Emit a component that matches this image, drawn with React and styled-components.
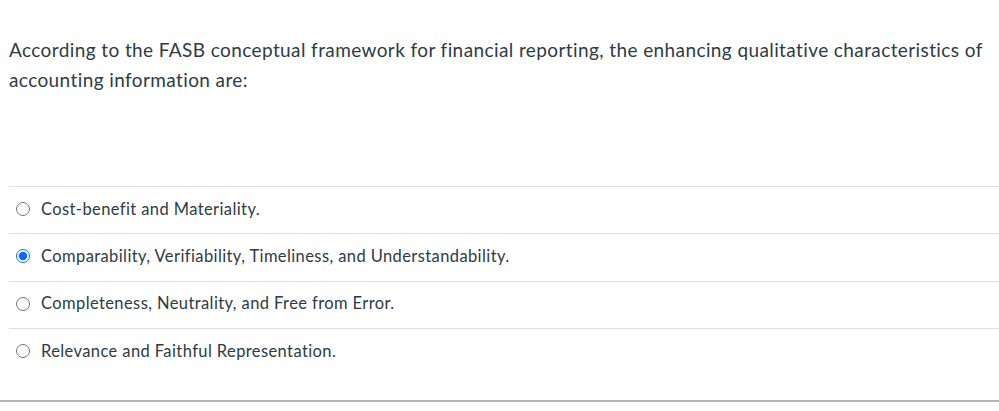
import styled, { createGlobalStyle } from 'styled-components';

const GlobalStyle = createGlobalStyle`
  body {
    margin: 0;
    background: #fff;
    font-family: Lato, "Open Sans", sans-serif;
    color: #2d3b45;
  }
`;

const answers = [
  { id: 'a1', text: 'Cost-benefit and Materiality.' },
  { id: 'a2', text: 'Comparability, Verifiability, Timeliness, and Understandability.' },
  { id: 'a3', text: 'Completeness, Neutrality, and Free from Error.' },
  { id: 'a4', text: 'Relevance and Faithful Representation.' },
];

const App = () => {
  return (
    <>
      <GlobalStyle />
      <Question>
        <QuestionText>
          According to the FASB conceptual framework for financial reporting, the enhancing
          qualitative characteristics of accounting information are:
        </QuestionText>
        <Answers>
          {answers.map((a) => (
            <Answer key={a.id}>
              <Radio type="radio" name="q1" defaultChecked={a.id === 'a2'} />
              <Label>{a.text}</Label>
            </Answer>
          ))}
        </Answers>
      </Question>
    </>
  );
};

const Question = styled.div`
  width: 999px;
  height: 402px;
  box-sizing: border-box;
  border-bottom: 2px solid #b4b4b4;
  display: flex;
  flex-direction: column;
`;

const QuestionText = styled.p`
  margin: 0;
  padding: 35px 8px 0 9px;
  font-size: 19px;
  letter-spacing: 0.4px;
  line-height: 30px;
  height: 186px;
  box-sizing: border-box;
`;

const Answers = styled.div`
  margin-left: 9px;
  display: flex;
  flex-direction: column;
`;

const Answer = styled.label`
  display: flex;
  align-items: center;
  height: 47.33px;
  box-sizing: border-box;
  border-top: 1px solid #dedede;
  padding: 0 0 3px 7px;
`;

const Radio = styled.input`
  width: 14px;
  height: 14px;
  margin: 1px 11px 0 0;
  accent-color: #0a6cff;
`;

const Label = styled.span`
  font-size: 16.5px;
  letter-spacing: 0.4px;
  line-height: 20px;
`;

export default App;
